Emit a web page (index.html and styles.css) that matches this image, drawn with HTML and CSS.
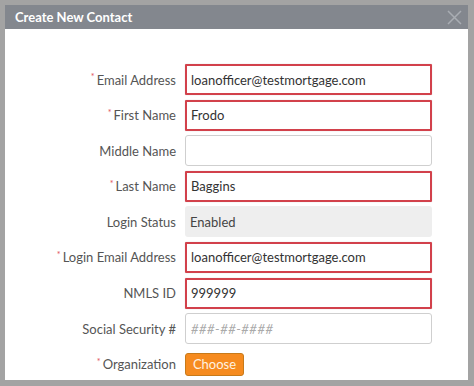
FILE: index.html
```html
<!DOCTYPE html>
<html lang="en">
<head>
  <meta charset="UTF-8">
  <title>Create New Contact</title>
  <link rel="stylesheet" href="styles.css">
</head>
<body>
  <div class="modal">
    <div class="modal-header">
      <span class="title">Create New Contact</span>
      <svg class="close" width="15" height="15" viewBox="0 0 15 15">
        <path d="M1 1L14 14M14 1L1 14" stroke="#a9adb3" stroke-width="1.5" fill="none"/>
      </svg>
    </div>
    <form class="form">
      <label class="label"><span class="req">*</span>Email Address</label>
      <div class="field flagged">loanofficer@testmortgage.com</div>

      <label class="label"><span class="req">*</span>First Name</label>
      <div class="field flagged">Frodo</div>

      <label class="label">Middle Name</label>
      <div class="field"></div>

      <label class="label"><span class="req">*</span>Last Name</label>
      <div class="field flagged">Baggins</div>

      <label class="label">Login Status</label>
      <div class="field static">Enabled</div>

      <label class="label"><span class="req">*</span>Login Email Address</label>
      <div class="field flagged">loanofficer@testmortgage.com</div>

      <label class="label">NMLS ID</label>
      <div class="field flagged">999999</div>

      <label class="label">Social Security #</label>
      <div class="field"><span class="placeholder">###-##-####</span></div>

      <label class="label"><span class="req">*</span>Organization</label>
      <div class="choose-cell"><button type="button" class="choose">Choose</button></div>
    </form>
  </div>
</body>
</html>
```

FILE: styles.css
```css
body {
  margin: 0;
  padding: 5px;
  background: #a3a3a3;
  font-family: Lato, 'Liberation Sans', sans-serif;
}
.modal {
  width: 463px;
  height: 375px;
  background: #fff;
  overflow: hidden;
}
.modal-header {
  height: 24px;
  background: #83878e;
  display: flex;
  align-items: center;
  justify-content: space-between;
  padding: 0 6px 0 10px;
}
.title {
  color: #fff;
  font-weight: bold;
  font-size: 13px;
}
.close {
  display: block;
}
.form {
  display: grid;
  grid-template-columns: 171px 247px;
  grid-auto-rows: 31px;
  column-gap: 9px;
  row-gap: 4.6px;
  padding-top: 35px;
  margin: 0;
}
.label {
  display: flex;
  align-items: center;
  justify-content: flex-end;
  font-size: 13px;
  color: #555;
}
.req {
  color: #e0525a;
  font-size: 9px;
  margin-right: 2px;
  position: relative;
  top: -3px;
}
.field {
  box-sizing: border-box;
  border: 1px solid #cfcfcf;
  border-radius: 3px;
  padding: 0 5px;
  display: flex;
  align-items: center;
  font-size: 13px;
  color: #333;
}
.flagged {
  border: 2px solid #d2414b;
  border-radius: 1px;
  padding-left: 4px;
  box-shadow: 0 0 1px rgba(0, 0, 0, 0.3);
}
.static {
  border: none;
  background: #eeeeee;
  color: #444;
}
.placeholder {
  color: #aaa;
  font-style: italic;
  letter-spacing: 0.5px;
}
.choose-cell {
  display: flex;
  align-items: center;
}
.choose {
  height: 23px;
  width: 59px;
  padding: 0;
  background: #f68b1f;
  color: #fff2e0;
  border: 1px solid #c77a1a;
  border-radius: 3px;
  font-family: Lato, 'Liberation Sans', sans-serif;
  font-size: 13px;
}
```
